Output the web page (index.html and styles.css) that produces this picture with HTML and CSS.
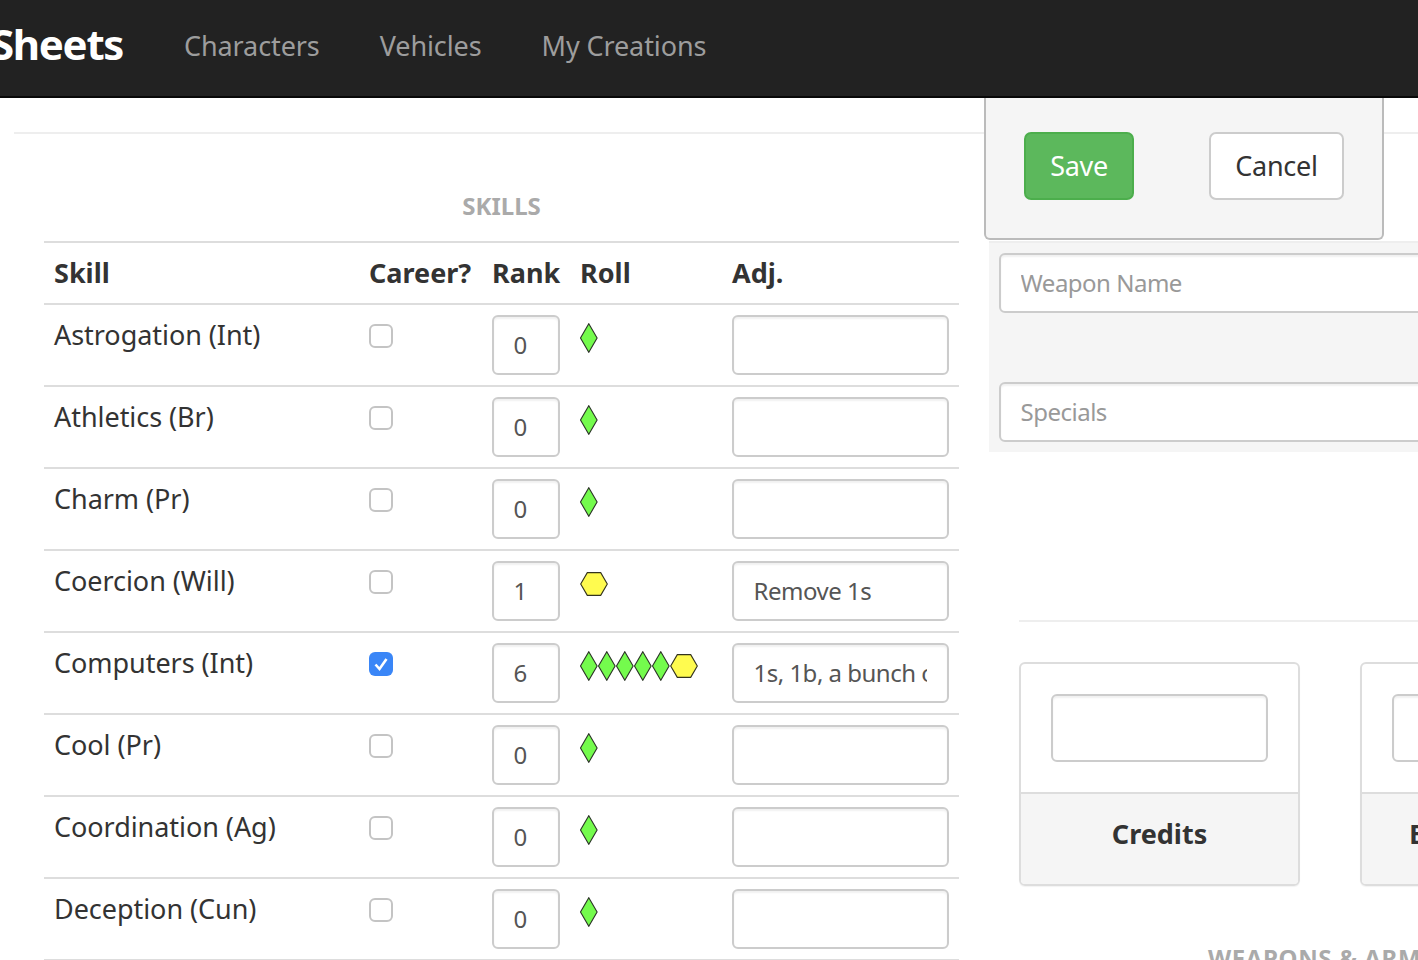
FILE: index.html
```html
<!DOCTYPE html>
<html lang="en">
<head>
<meta charset="utf-8">
<title>Sheets</title>
<link rel="stylesheet" href="styles.css">
</head>
<body>
<svg class="defs" width="0" height="0" aria-hidden="true">
  <symbol id="ability" viewBox="0 0 18 30"><polygon points="8.8,0.7 17.1,15 8.8,29.3 0.5,15" fill="#74fb4d" stroke="#2b3327" stroke-width="1.1"/></symbol>
  <symbol id="prof" viewBox="0 0 28 24"><polygon points="7.3,0.6 20.7,0.6 27.3,12 20.7,23.4 7.3,23.4 0.7,12" fill="#fffb4f" stroke="#33331f" stroke-width="1.1"/></symbol>
</svg>
<nav class="navbar">
  <span class="brand">Sheets</span>
  <a class="nav-link">Characters</a>
  <a class="nav-link">Vehicles</a>
  <a class="nav-link">My Creations</a>
</nav>
<div class="save-panel">
  <button class="btn btn-save">Save</button>
  <button class="btn btn-cancel">Cancel</button>
</div>
<main class="page">
  <hr class="rule rule-top">
  <div class="columns">
    <section class="left">
      <h2 class="section-title">SKILLS</h2>
      <table class="skills">
        <colgroup><col class="c-skill"><col class="c-career"><col class="c-rank"><col class="c-roll"><col class="c-adj"></colgroup>
        <thead><tr><th>Skill</th><th>Career?</th><th>Rank</th><th>Roll</th><th>Adj.</th></tr></thead>
        <tbody>
          <tr><td>Astrogation (Int)</td><td><input class="check" type="checkbox"></td><td><input class="field rank" value="0"></td><td><span class="dice"><svg class="d"><use href="#ability"/></svg></span></td><td><input class="field adj"></td></tr>
          <tr><td>Athletics (Br)</td><td><input class="check" type="checkbox"></td><td><input class="field rank" value="0"></td><td><span class="dice"><svg class="d"><use href="#ability"/></svg></span></td><td><input class="field adj"></td></tr>
          <tr><td>Charm (Pr)</td><td><input class="check" type="checkbox"></td><td><input class="field rank" value="0"></td><td><span class="dice"><svg class="d"><use href="#ability"/></svg></span></td><td><input class="field adj"></td></tr>
          <tr><td>Coercion (Will)</td><td><input class="check" type="checkbox"></td><td><input class="field rank" value="1"></td><td><span class="dice"><svg class="p"><use href="#prof"/></svg></span></td><td><input class="field adj" value="Remove 1s"></td></tr>
          <tr><td>Computers (Int)</td><td><input class="check" type="checkbox" checked></td><td><input class="field rank" value="6"></td><td><span class="dice"><svg class="d"><use href="#ability"/></svg><svg class="d"><use href="#ability"/></svg><svg class="d"><use href="#ability"/></svg><svg class="d"><use href="#ability"/></svg><svg class="d"><use href="#ability"/></svg><svg class="p"><use href="#prof"/></svg></span></td><td><input class="field adj" value="1s, 1b, a bunch of stuff"></td></tr>
          <tr><td>Cool (Pr)</td><td><input class="check" type="checkbox"></td><td><input class="field rank" value="0"></td><td><span class="dice"><svg class="d"><use href="#ability"/></svg></span></td><td><input class="field adj"></td></tr>
          <tr><td>Coordination (Ag)</td><td><input class="check" type="checkbox"></td><td><input class="field rank" value="0"></td><td><span class="dice"><svg class="d"><use href="#ability"/></svg></span></td><td><input class="field adj"></td></tr>
          <tr><td>Deception (Cun)</td><td><input class="check" type="checkbox"></td><td><input class="field rank" value="0"></td><td><span class="dice"><svg class="d"><use href="#ability"/></svg></span></td><td><input class="field adj"></td></tr>
        </tbody>
      </table>
    </section>
    <section class="right">
      <div class="weapon-form">
        <input class="field wide" placeholder="Weapon Name">
        <input class="field wide" placeholder="Specials">
      </div>
      <hr class="rule rule-mid">
      <div class="cards">
        <div class="card"><div class="card-body"><input class="field card-input"></div><div class="card-foot">Credits</div></div>
        <div class="card"><div class="card-body"><input class="field card-input"></div><div class="card-foot">Encumbrance</div></div>
      </div>
      <h2 class="section-title weapons-title">WEAPONS &amp; ARMOR</h2>
    </section>
  </div>
</main>
</body>
</html>
```
FILE: styles.css
```css
* { box-sizing: border-box; }
html, body { margin: 0; height: 960px; overflow: hidden; background: #fff; }
body { width: 1418px; position: relative; font-family: "Noto Sans", "Open Sans", sans-serif; font-size: 27px; color: #333; }
.defs { position: absolute; }
.navbar { height: 98px; background: #222; border-bottom: 2px solid #080808; display: flex; align-items: center; white-space: nowrap; padding-bottom: 6px; }
.brand { margin: 0 0 4px -9px; width: 193px; font-size: 42px; font-weight: 700; color: #fff; letter-spacing: -1.3px; }
.nav-link { font-size: 27px; color: #9d9d9d; margin-right: 60px; letter-spacing: -.1px; }
.save-panel { position: absolute; left: 984px; top: 98px; width: 400px; height: 142px; background: #f5f5f5; border: 2px solid #bbb; border-top: 0; border-radius: 0 0 6px 6px; display: flex; align-items: flex-start; justify-content: space-between; padding: 34px 38px 0 38px; z-index: 2; }
.btn { height: 68px; border-radius: 7px; font: inherit; font-size: 27px; border: 2px solid; letter-spacing: -.3px; padding: 0 0 2px; }
.btn-save { width: 110px; background: #5cb85c; border-color: #4cae4c; color: #fff; }
.btn-cancel { width: 135px; background: #fff; border-color: #ccc; color: #333; }
.page { padding-top: 34px; }
.rule { border: 0; border-top: 2px solid #eee; margin: 0; }
.rule-top { margin-left: 14px; }
.columns { display: flex; align-items: flex-start; }
.left { width: 989px; padding: 0 30px 0 44px; flex: none; }
.section-title { margin: 0; text-align: center; font-size: 24px; font-weight: 700; color: #aaa; line-height: 34px; }
.left .section-title { padding-top: 55px; height: 107px; }
.skills { width: 915px; table-layout: fixed; border-collapse: collapse; }
.c-skill { width: 315px; } .c-career { width: 123px; } .c-rank { width: 88px; } .c-roll { width: 152px; } .c-adj { width: 237px; }
.skills th, .skills td { padding: 10px; text-align: left; vertical-align: top; border-top: 2px solid #ddd; }
.skills th { height: 62px; font-size: 27px; font-weight: 700; line-height: 38px; padding-top: 11px; }
.skills td { height: 82px; line-height: 40px; white-space: nowrap; letter-spacing: -.05px; }
.skills tbody tr:last-child td { border-bottom: 2px solid #ddd; }
.field { display: block; height: 60px; border: 2px solid #ccc; border-radius: 6px; background: #fff; color: #555; font: inherit; font-size: 24px; padding: 0 20px 2px 19.5px; box-shadow: inset 0 2px 2px rgba(0,0,0,.06); outline: 0; letter-spacing: -.5px; }
.field::placeholder { color: #999; opacity: 1; }
.rank { width: 68px; }
.adj { width: 217px; }
.check { appearance: none; -webkit-appearance: none; display: block; width: 24px; height: 24px; margin: 9px 0 0; border: 2px solid #c4c4c4; border-radius: 6px; background: #fff; }
.check:checked { border: 0; background: #3a86f7 url("data:image/svg+xml,%3Csvg xmlns='http://www.w3.org/2000/svg' viewBox='0 0 24 24'%3E%3Cpath d='M6.5 12.5l4 4.5 7-10' fill='none' stroke='%23fff' stroke-width='2.6'/%3E%3C/svg%3E") center/24px no-repeat; }
.dice { display: flex; align-items: center; height: 30px; margin-top: 8px; }
.d { width: 18px; height: 30px; flex: none; }
.p { width: 28px; height: 24px; flex: none; }
.right { width: 600px; flex: none; }
.weapon-form { margin-top: 107px; height: 211px; background: #f5f5f5; border-top: 2px solid #eee; padding: 10px 0 0 10px; display: flex; flex-direction: column; gap: 69px; }
.wide { width: 590px; }
.rule-mid { margin: 168px 0 0 30px; }
.cards { display: flex; gap: 60px; margin: 40px 0 0 30px; }
.card { width: 281px; height: 224px; flex: none; border: 2px solid #ddd; border-radius: 6px; overflow: hidden; box-shadow: 0 1px 1px rgba(0,0,0,.05); display: flex; flex-direction: column; }
.card-body { height: 130px; padding: 30px; border-bottom: 2px solid #ddd; }
.card-input { width: 217px; height: 68px; }
.card-foot { flex: 1; background: #f5f5f5; text-align: center; font-size: 27px; font-weight: 700; padding-top: 21px; white-space: nowrap; }
.weapons-title { margin-top: 55px; text-align: left; padding-left: 219px; white-space: nowrap; letter-spacing: .6px; }
```
